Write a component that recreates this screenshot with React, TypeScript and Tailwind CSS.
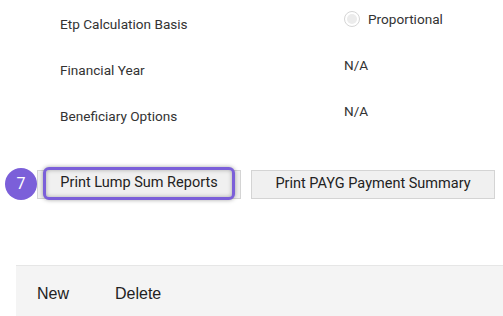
import React from 'react';

const rows = [
  { label: 'Etp Calculation Basis', value: 'radio' },
  { label: 'Financial Year', value: 'N/A' },
  { label: 'Beneficiary Options', value: 'N/A' },
];

export default function App() {
  return (
    <div className="w-[503px] h-[316px] bg-white overflow-hidden font-['Roboto',sans-serif] text-[#333]">
      <div className="flex flex-col pl-[60px]">
        {rows.map((r) => (
          <div key={r.label} className="flex h-[46px] pt-[12px]">
            <div className="w-[284px] text-[13.6px] leading-[20px] pt-[2px]">{r.label}</div>
            {r.value === 'radio' ? (
              <div className="flex items-center gap-[8px] -mt-[3px] h-[20px]">
                <span className="w-[16px] h-[16px] rounded-full border border-[#d6d6d6] bg-white flex items-center justify-center">
                  <span className="w-[10px] h-[10px] rounded-full bg-[#ececec]" />
                </span>
                <span className="text-[13.6px] leading-[20px]">Proportional</span>
              </div>
            ) : (
              <div className="text-[13.6px] leading-[20px] -mt-[3px]">{r.value}</div>
            )}
          </div>
        ))}
      </div>

      <div className="flex items-center mt-[29px] pl-[5px] h-[34px]">
        <div className="relative z-10 w-[32px] h-[32px] rounded-full bg-[#7b5fd9] text-white flex items-center justify-center text-[16px]">
          7
        </div>
        <div className="relative w-[204px] h-[29px] bg-[#f0f0f0] border border-[#d4d4d4]">
          <div className="absolute -top-[4px] left-[5px] right-[5px] -bottom-[2px] rounded-[6px] border-[3px] border-[#7b5fd9] shadow-[0_0_4px_rgba(0,0,0,0.35),inset_0_0_4px_rgba(0,0,0,0.3)] bg-[#f0f0f0] flex items-center justify-center text-[14.5px] text-[#222]">
            Print Lump Sum Reports
          </div>
        </div>
        <button className="ml-[10px] w-[244px] h-[29px] bg-[#f0f0f0] border border-[#d4d4d4] text-[14.5px] text-[#222]">
          Print PAYG Payment Summary
        </button>
      </div>

      <div className="ml-[16px] mt-[64px] h-[51px] pt-[5px] bg-[#f4f4f4] border-t border-[#e6e6e6] flex items-center pl-[21px] gap-[46px] font-['Liberation_Sans',sans-serif] text-[16px] text-[#222]">
        <span>New</span>
        <span>Delete</span>
      </div>
    </div>
  );
}
